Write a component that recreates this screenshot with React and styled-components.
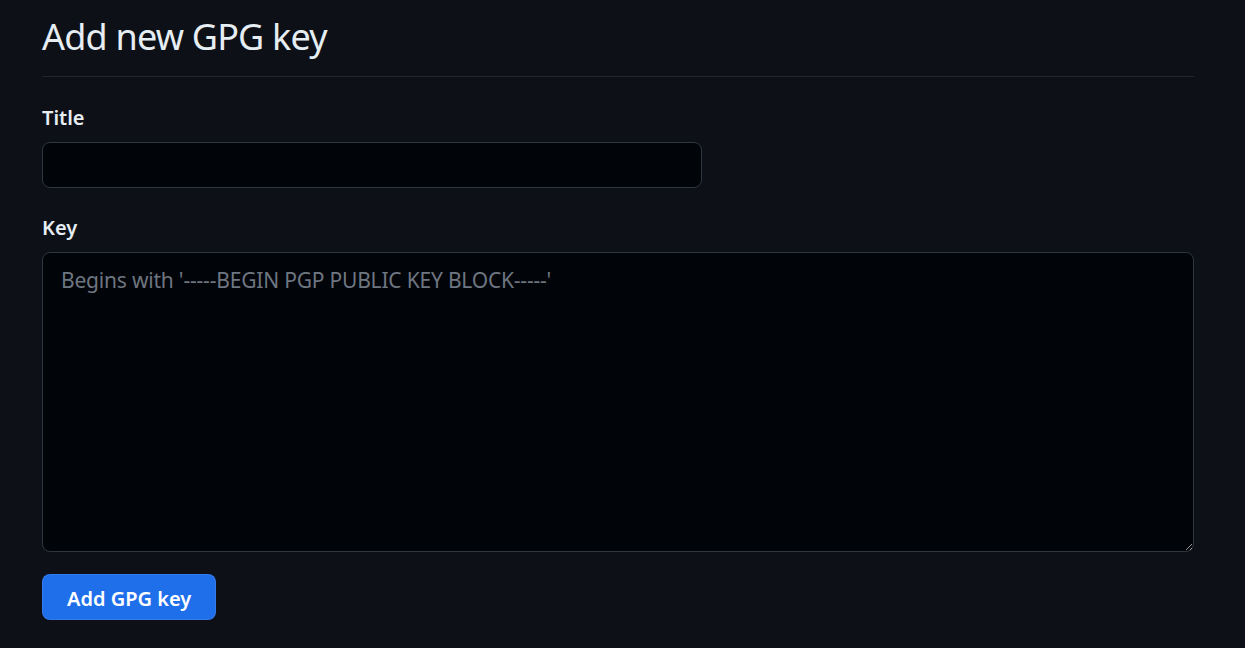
import styled, { createGlobalStyle } from "styled-components";

const GlobalStyle = createGlobalStyle`
  html, body {
    margin: 0;
    padding: 0;
    background: #0d1117;
  }
  body {
    font-family: "Noto Sans", "Open Sans", sans-serif;
    color: #e6edf3;
  }
`;

const Page = styled.div`
  padding: 13px 51px 0 42px;
`;

const Heading = styled.h2`
  margin: 0;
  padding-bottom: 15px;
  border-bottom: 1px solid #21262d;
  font-size: 36px;
  font-weight: 400;
  letter-spacing: -0.8px;
  line-height: 47.5px;
  color: #e6edf3;
`;

const Form = styled.form`
  display: flex;
  flex-direction: column;
  padding-top: 27px;
`;

const Group = styled.div`
  display: flex;
  flex-direction: column;
  gap: 10px;
  margin-bottom: ${(p) => p.$gap || 26}px;
`;

const Label = styled.label`
  font-size: 20px;
  font-weight: 600;
  line-height: 28px;
  color: #e6edf3;
`;

const Input = styled.input`
  box-sizing: border-box;
  width: 660px;
  height: 46px;
  padding: 0 17px;
  background: #010409;
  border: 1px solid #30363d;
  border-radius: 8px;
  color: #e6edf3;
  font: inherit;
  font-size: 20px;
  outline: none;
`;

const TextArea = styled.textarea`
  box-sizing: border-box;
  width: 100%;
  height: 300px;
  padding: 13px 18px;
  background: #010409;
  border: 1px solid #30363d;
  border-radius: 8px;
  color: #e6edf3;
  font-family: inherit;
  font-size: 21px;
  letter-spacing: -0.2px;
  line-height: 28px;
  outline: none;

  &::placeholder {
    color: #6e7681;
  }
`;

const Button = styled.button`
  align-self: flex-start;
  box-sizing: border-box;
  height: 46px;
  padding: 3px 24px 0;
  background: #1f6feb;
  border: 1px solid rgba(240, 246, 252, 0.1);
  border-radius: 8px;
  color: #ffffff;
  font-family: inherit;
  font-size: 20px;
  font-weight: 600;
  cursor: pointer;
`;

export default function App() {
  return (
    <>
      <GlobalStyle />
      <Page>
        <Heading>Add new GPG key</Heading>
        <Form onSubmit={(e) => e.preventDefault()}>
          <Group>
            <Label htmlFor="title">Title</Label>
            <Input id="title" type="text" />
          </Group>
          <Group $gap={22}>
            <Label htmlFor="key">Key</Label>
            <TextArea
              id="key"
              placeholder="Begins with '-----BEGIN PGP PUBLIC KEY BLOCK-----'"
            />
          </Group>
          <Button type="submit">Add GPG key</Button>
        </Form>
      </Page>
    </>
  );
}
